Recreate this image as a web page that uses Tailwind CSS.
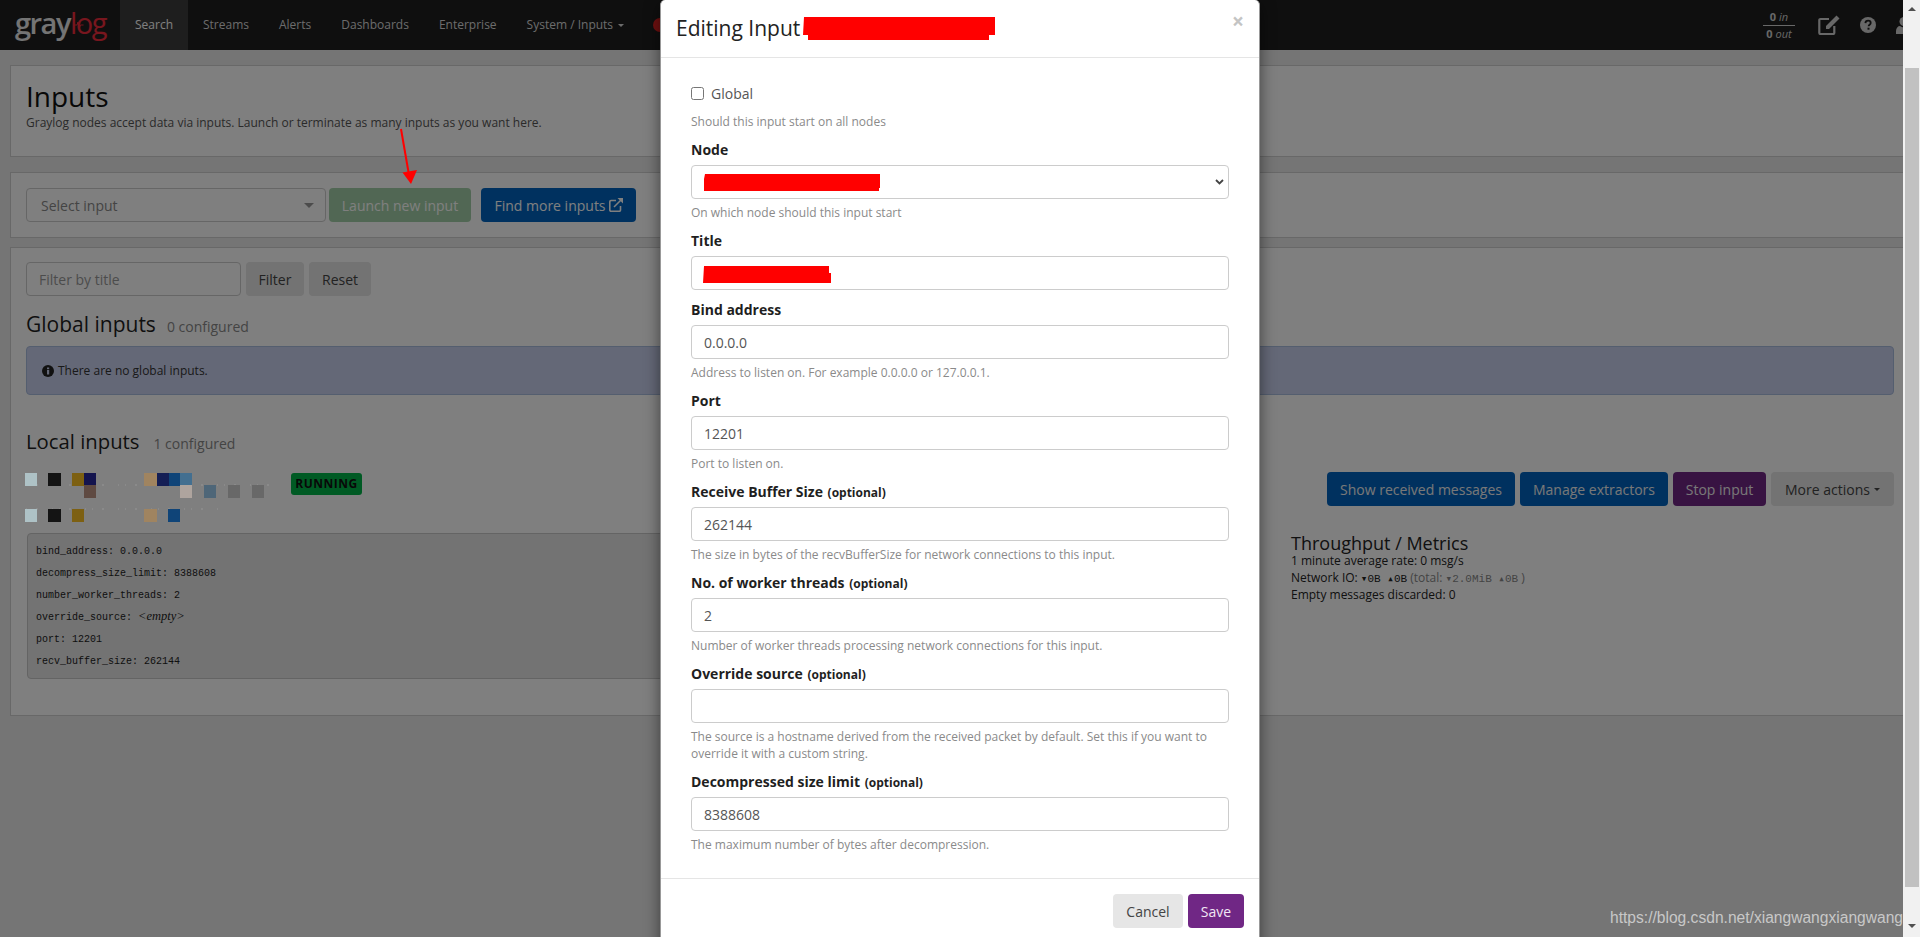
<!DOCTYPE html>
<html lang="en">
<head>
  <meta charset="UTF-8" />
  <title>Graylog - Inputs</title>
  <script src="https://cdn.jsdelivr.net/npm/@tailwindcss/browser@4"></script>
</head>
<body class="bg-[#eaeaea] font-['Open_Sans',sans-serif] text-[14px] text-[#1f1f1f] h-[937px] overflow-hidden relative">

  <!-- Navbar -->
  <header class="h-[50px] bg-[#1f1f1f] flex items-stretch text-[12px] text-[#d8d8d8]">
    <a class="relative w-[120px] pl-[15px] flex items-center text-[29px] font-semibold tracking-[-1.500px] leading-none pb-[6px]"><span class="text-[#e8e8e8]">gray</span><span class="text-[#f02c3c] font-normal">log</span>
      <svg class="absolute left-[74px] top-[21px] w-[10px] h-[8px]" viewBox="0 0 10 8" fill="none" stroke="#f02c3c"><path d="M0 4h3l1-3 1.500 6 1-3h3"/></svg>
    </a>
    <a class="w-[68px] bg-[#3d3d3d] flex items-center justify-center text-white">Search</a>
    <a class="ml-[15px] flex items-center">Streams</a>
    <a class="ml-[30px] flex items-center">Alerts</a>
    <a class="ml-[30px] flex items-center">Dashboards</a>
    <a class="ml-[30px] flex items-center">Enterprise</a>
    <a class="ml-[30px] flex items-center gap-[5px]">System / Inputs <span class="border-x-[3.500px] border-x-transparent border-t-[3.500px] border-t-current"></span></a>
    <span class="ml-[29px] mt-[18px] w-[14px] h-[14px] rounded-full bg-[#e02020]"></span>
    <div class="ml-auto flex items-center text-[#d0d0d0]">
      <div class="w-[32px] text-[11px] leading-[14px] text-center flex flex-col mr-[23px]">
        <span class="border-b border-[#d0d0d0] pb-[1px]"><b>0</b> <i>in</i></span>
        <span class="pt-[1px]"><b>0</b> <i>out</i></span>
      </div>
      <svg class="w-[22px] h-[20px] mr-[20px]" viewBox="0 0 22 20" fill="none" stroke="#d0d0d0" stroke-width="2.200"><path d="M11 4H2.500a1.200 1.200 0 0 0-1.200 1.200v12.600a1.200 1.200 0 0 0 1.200 1.200h12.600a1.200 1.200 0 0 0 1.200-1.200V11"/><path fill="#d0d0d0" stroke="none" d="M18.500 .5l3 3L11 14H8v-3z"/></svg>
      <svg class="w-[16px] h-[16px] mr-[20px]" viewBox="0 0 16 16"><circle cx="8" cy="8" r="8" fill="#d0d0d0"/><path d="M5.400 6.100c.1-1.600 1.200-2.400 2.700-2.400 1.500 0 2.600 .9 2.600 2.200 0 1.900-2.100 1.800-2.100 3.400" fill="none" stroke="#1f1f1f" stroke-width="1.800"/><rect x="7.500" y="10.700" width="2" height="2" fill="#1f1f1f"/></svg>
      <svg class="w-[16px] h-[17px] mr-[8px]" viewBox="0 0 16 17" fill="#d0d0d0"><circle cx="8" cy="4.500" r="4.500"/><path d="M0 17v-3c0-3 2-5 4-5 1 .8 2.500 1.300 4 1.300s3-.5 4-1.300c2 0 4 2 4 5v3z"/></svg>
    </div>
  </header>

  <!-- Page content -->
  <main class="mx-[10px]">
    <section class="mt-[15px] h-[92px] bg-white border border-[#d0d0d0] px-[15px]">
      <h1 class="mt-[11px] text-[28px] leading-[38px] text-[#111]">Inputs</h1>
      <p class="text-[12px] leading-[17px] text-[#555] -mt-[1px]">Graylog nodes accept data via inputs. Launch or terminate as many inputs as you want here.</p>
    </section>

    <section class="mt-[15px] h-[66px] bg-white border border-[#d0d0d0] px-[15px] pt-[15px] flex">
      <div class="w-[300px] h-[34px] border border-[#ccc] rounded-[4px] pl-[14px] pr-[11px] flex items-center justify-between text-[#888]">Select input <span class="border-x-[5px] border-x-transparent border-t-[5px] border-t-[#999]"></span></div>
      <button class="ml-[3px] w-[142px] h-[34px] rounded-[4px] bg-[#a3cfa8] text-white">Launch new input</button>
      <button class="ml-[10px] w-[155px] h-[34px] rounded-[4px] bg-[#0063be] text-white flex items-center justify-center gap-[3px]">Find more inputs
        <svg class="w-[14px] h-[14px]" viewBox="0 0 14 14" fill="none" stroke="#fff" stroke-width="1.600"><path d="M11.500 8v4a1.200 1.200 0 0 1-1.200 1.200H2A1.200 1.200 0 0 1 .8 12V3.700A1.200 1.200 0 0 1 2 2.500h5"/><path d="M5 9l8-8"/><path fill="#fff" stroke="none" d="M8.500 0H14v5.500z"/></svg>
      </button>
    </section>

    <section class="mt-[9px] bg-white border border-[#d0d0d0] px-[15px] pt-[14px] pb-[36px]">
      <div class="flex h-[34px]">
        <div class="w-[215px] border border-[#ccc] rounded-[4px] pl-[12px] flex items-center text-[#999]">Filter by title</div>
        <button class="ml-[5px] w-[58px] rounded-[4px] bg-[#e6e6e6] text-[#444]">Filter</button>
        <button class="ml-[5px] w-[62px] rounded-[4px] bg-[#e6e6e6] text-[#444]">Reset</button>
      </div>

      <h2 class="mt-[13px] h-[30px] text-[21px] leading-[30px] flex items-baseline gap-[11px]">Global inputs <small class="text-[14px] text-[#888]">0 configured</small></h2>
      <div class="mt-[7px] h-[49px] bg-[#c8d0ee] border border-[#a9bcde] rounded-[4px] pl-[15px] flex items-center gap-[4px] text-[12px] text-[#333]">
        <svg class="w-[12px] h-[12px]" viewBox="0 0 12 12"><circle cx="6" cy="6" r="6" fill="#222"/><rect x="5" y="5" width="2.200" height="4.500" fill="#c8d0ee"/><rect x="5" y="2.500" width="2.200" height="1.700" fill="#c8d0ee"/></svg>
        There are no global inputs.
      </div>

      <h2 class="mt-[31px] h-[30px] text-[20.300px] leading-[30px] flex items-baseline gap-[14px]">Local inputs <small class="text-[14px] text-[#888]">1 configured</small></h2>

      <div class="mt-[16px] h-[61px] flex items-start">
        <span class="ml-[265px] mt-[1px] w-[71px] h-[22px] rounded-[3px] bg-[#00b548] text-[#111] text-[12px] font-bold tracking-[0.500px] flex items-center justify-center">RUNNING</span>
        <div class="ml-auto flex gap-[5px] h-[34px]">
          <button class="w-[188px] rounded-[4px] bg-[#0063be] text-[#f0f0f0]">Show received messages</button>
          <button class="w-[148px] rounded-[4px] bg-[#0063be] text-[#f0f0f0]">Manage extractors</button>
          <button class="w-[93px] rounded-[4px] bg-[#702785] text-[#f0f0f0]">Stop input</button>
          <button class="w-[123px] rounded-[4px] bg-[#e6e6e6] text-[#444] flex items-center justify-center gap-[4px]">More actions <span class="border-x-[3.500px] border-x-transparent border-t-[3.500px] border-t-current"></span></button>
        </div>
      </div>

      <div class="flex">
        <div class="ml-[1px] w-[1230px] h-[146px] bg-[#e6e6e6] border border-[#c8c8c8] rounded-[4px] px-[8px] pt-[7px] font-['Liberation_Mono',monospace] text-[10px] leading-[22px] text-[#222]">
          <div>bind_address: 0.0.0.0</div>
          <div>decompress_size_limit: 8388608</div>
          <div>number_worker_threads: 2</div>
          <div>override_source: <i class="font-['Liberation_Serif',serif] text-[12.500px] leading-none">&lt;empty&gt;</i></div>
          <div>port: 12201</div>
          <div>recv_buffer_size: 262144</div>
        </div>
        <div class="ml-[34px] text-[12px] leading-[16px] text-[#222]">
          <h3 class="text-[18px] leading-[20px]">Throughput / Metrics</h3>
          <div>1 minute average rate: 0 msg/s</div>
          <div class="my-[1px]">Network IO: <span class="font-['Liberation_Mono',monospace] text-[11px] leading-none">▾0B ▴0B</span> <span class="text-[#888]">(total: <span class="font-['Liberation_Mono',monospace] text-[11px] leading-none">▾2.0MiB ▴0B</span> )</span></div>
          <div>Empty messages discarded: 0</div>
        </div>
      </div>
    </section>
  </main>

  <!-- Modal backdrop -->
  <div class="absolute inset-0 bg-black/50"></div>

  <!-- Mosaic pasted over the input name -->
  <svg class="absolute left-[24px] top-[472px] w-[267px] h-[54px]" viewBox="0 0 267 54">
    <path d="M2 13H250M2 37H200" stroke="#a0a0a0" stroke-width=".7" stroke-dasharray="1 9 2 14 1 6" fill="none"/>
    <rect x="1" y="1" width="12" height="13" fill="#aec2c6"/>
    <rect x="24" y="1" width="13" height="13" fill="#141414"/>
    <rect x="48" y="1" width="13" height="13" fill="#7d6012"/>
    <rect x="60" y="1" width="12" height="13" fill="#14144e"/>
    <rect x="120" y="1" width="13" height="13" fill="#a08460"/>
    <rect x="133" y="1" width="12" height="13" fill="#141e55"/>
    <rect x="145" y="1" width="11" height="13" fill="#0f4478"/>
    <rect x="156" y="1" width="12" height="13" fill="#436f90"/>
    <rect x="60" y="13" width="12" height="13" fill="#5f4a42"/>
    <rect x="156" y="13" width="12" height="13" fill="#aea49e"/>
    <rect x="180" y="13" width="12" height="13" fill="#4e6678"/>
    <rect x="204" y="13" width="12" height="13" fill="#686868"/>
    <rect x="228" y="13" width="12" height="13" fill="#686868"/>
    <rect x="1" y="37" width="12" height="13" fill="#aec2c6"/>
    <rect x="24" y="37" width="13" height="13" fill="#141414"/>
    <rect x="48" y="37" width="12" height="13" fill="#7d6012"/>
    <rect x="120" y="37" width="13" height="13" fill="#a08460"/>
    <rect x="144" y="37" width="12" height="13" fill="#0f4478"/>
  </svg>

  <!-- Arrow drawn on the screenshot -->
  <svg class="absolute left-[395px] top-[125px] w-[24px] h-[64px]" viewBox="0 0 24 64"><path d="M6 4l8 46" stroke="#f00" stroke-width="2" fill="none"/><path d="M7.500 47.500L22 45l-6 14z" fill="#f00"/></svg>

  <!-- Edit input modal -->
  <div class="absolute left-[660px] top-0 w-[600px] h-[960px] bg-white border-x border-[#999] rounded-t-[5px] shadow-[0_5px_15px_rgba(0,0,0,0.5)]">
    <div class="h-[58px] border-b border-[#e5e5e5] pl-[15px] pr-[15px] flex items-center relative">
      <h4 class="text-[21px] leading-[30px] text-[#222] flex items-center -mt-[1px]">Editing Input
        <svg class="ml-[3px] mt-[1px] w-[192px] h-[24px]" viewBox="0 0 192 24"><path d="M1 0H192V18H186V23H5V18H0z" fill="#f00"/></svg>
      </h4>
      <span class="absolute right-[15px] top-[8px] text-[21px] font-bold leading-[26px] text-[#c4c4c4]">×</span>
    </div>

    <form class="px-[30px] pt-[25px] pb-[15px] text-[14px]">
      <label class="h-[20px] flex items-center gap-[7px] text-[#555]"><input type="checkbox" class="w-[13px] h-[13px]"> Global</label>
      <p class="mt-[10px] mb-[10px] text-[12px] leading-[17px] text-[#8a8a8a]">Should this input start on all nodes</p>

      <label class="block h-[20px] mb-[5px] font-bold leading-[20px]">Node</label>
      <div class="relative">
        <select class="w-full h-[34px] bg-white border border-[#ccc] rounded-[4px] px-[8px] appearance-none"><option></option></select>
        <svg class="absolute left-[13px] top-[9px] w-[176px] h-[17px]" viewBox="0 0 176 17"><path d="M1 0H176V14H175V17H0V5z" fill="#f00"/></svg>
        <svg class="absolute right-[5px] top-[14px] w-[9px] h-[6px]" viewBox="0 0 9 6" fill="none" stroke="#444" stroke-width="1.800"><path d="M1 1l3.500 3.500L8 1"/></svg>
      </div>
      <p class="mt-[5px] mb-[10px] text-[12px] leading-[17px] text-[#8a8a8a]">On which node should this input start</p>

      <label class="block h-[20px] mb-[5px] font-bold leading-[20px]">Title</label>
      <div class="relative">
        <input class="w-full h-[34px] border border-[#ccc] rounded-[4px] px-[12px]">
        <svg class="absolute left-[12px] top-[10px] w-[128px] h-[17px]" viewBox="0 0 128 17"><path d="M1 0H126V7H128V17H0z" fill="#f00"/></svg>
      </div>

      <label class="block mt-[10px] h-[20px] mb-[5px] font-bold leading-[20px]">Bind address</label>
      <input value="0.0.0.0" class="w-full h-[34px] border border-[#ccc] rounded-[4px] px-[12px] text-[#555]">
      <p class="mt-[5px] mb-[10px] text-[12px] leading-[17px] text-[#8a8a8a]">Address to listen on. For example 0.0.0.0 or 127.0.0.1.</p>

      <label class="block h-[20px] mb-[5px] font-bold leading-[20px]">Port</label>
      <input value="12201" class="w-full h-[34px] border border-[#ccc] rounded-[4px] px-[12px] text-[#555]">
      <p class="mt-[5px] mb-[10px] text-[12px] leading-[17px] text-[#8a8a8a]">Port to listen on.</p>

      <label class="block h-[20px] mb-[5px] font-bold leading-[20px]">Receive Buffer Size <small class="text-[12px] ml-[1px]">(optional)</small></label>
      <input value="262144" class="w-full h-[34px] border border-[#ccc] rounded-[4px] px-[12px] text-[#555]">
      <p class="mt-[5px] mb-[10px] text-[12px] leading-[17px] text-[#8a8a8a]">The size in bytes of the recvBufferSize for network connections to this input.</p>

      <label class="block h-[20px] mb-[5px] font-bold leading-[20px]">No. of worker threads <small class="text-[12px] ml-[1px]">(optional)</small></label>
      <input value="2" class="w-full h-[34px] border border-[#ccc] rounded-[4px] px-[12px] text-[#555]">
      <p class="mt-[5px] mb-[10px] text-[12px] leading-[17px] text-[#8a8a8a]">Number of worker threads processing network connections for this input.</p>

      <label class="block h-[20px] mb-[5px] font-bold leading-[20px]">Override source <small class="text-[12px] ml-[1px]">(optional)</small></label>
      <input class="w-full h-[34px] border border-[#ccc] rounded-[4px] px-[12px] text-[#555]">
      <p class="mt-[5px] mb-[10px] text-[12px] leading-[17px] text-[#8a8a8a]">The source is a hostname derived from the received packet by default. Set this if you want to override it with a custom string.</p>

      <label class="block h-[20px] mb-[5px] font-bold leading-[20px]">Decompressed size limit <small class="text-[12px] ml-[1px]">(optional)</small></label>
      <input value="8388608" class="w-full h-[34px] border border-[#ccc] rounded-[4px] px-[12px] text-[#555]">
      <p class="mt-[5px] mb-[10px] text-[12px] leading-[17px] text-[#8a8a8a]">The maximum number of bytes after decompression.</p>
    </form>

    <div class="border-t border-[#e5e5e5] pt-[15px] pr-[15px] flex justify-end gap-[5px]">
      <button class="w-[70px] h-[34px] rounded-[4px] bg-[#e6e6e6] text-[#444]">Cancel</button>
      <button class="w-[56px] h-[34px] rounded-[4px] bg-[#702785] text-[#f0e6f4]">Save</button>
    </div>
  </div>

  <!-- Watermark from the blog the picture came from -->
  <span class="absolute left-[1610px] top-[909px] font-['Liberation_Sans',sans-serif] text-[15.600px] leading-[18px] text-[#c8c8c8] whitespace-nowrap">https://blog.csdn.net/xiangwangxiangwang</span>

  <!-- Modal scrollbar -->
  <div class="absolute right-0 top-0 w-[17px] h-full bg-[#f1f1f1] flex flex-col items-center">
    <span class="mt-[7px] border-x-4 border-x-transparent border-b-4 border-b-[#505050]"></span>
    <div class="mt-[57px] w-[14px] h-[819px] bg-[#c1c1c1]"></div>
    <span class="mt-[37px] border-x-4 border-x-transparent border-t-4 border-t-[#505050]"></span>
  </div>
</body>
</html>
